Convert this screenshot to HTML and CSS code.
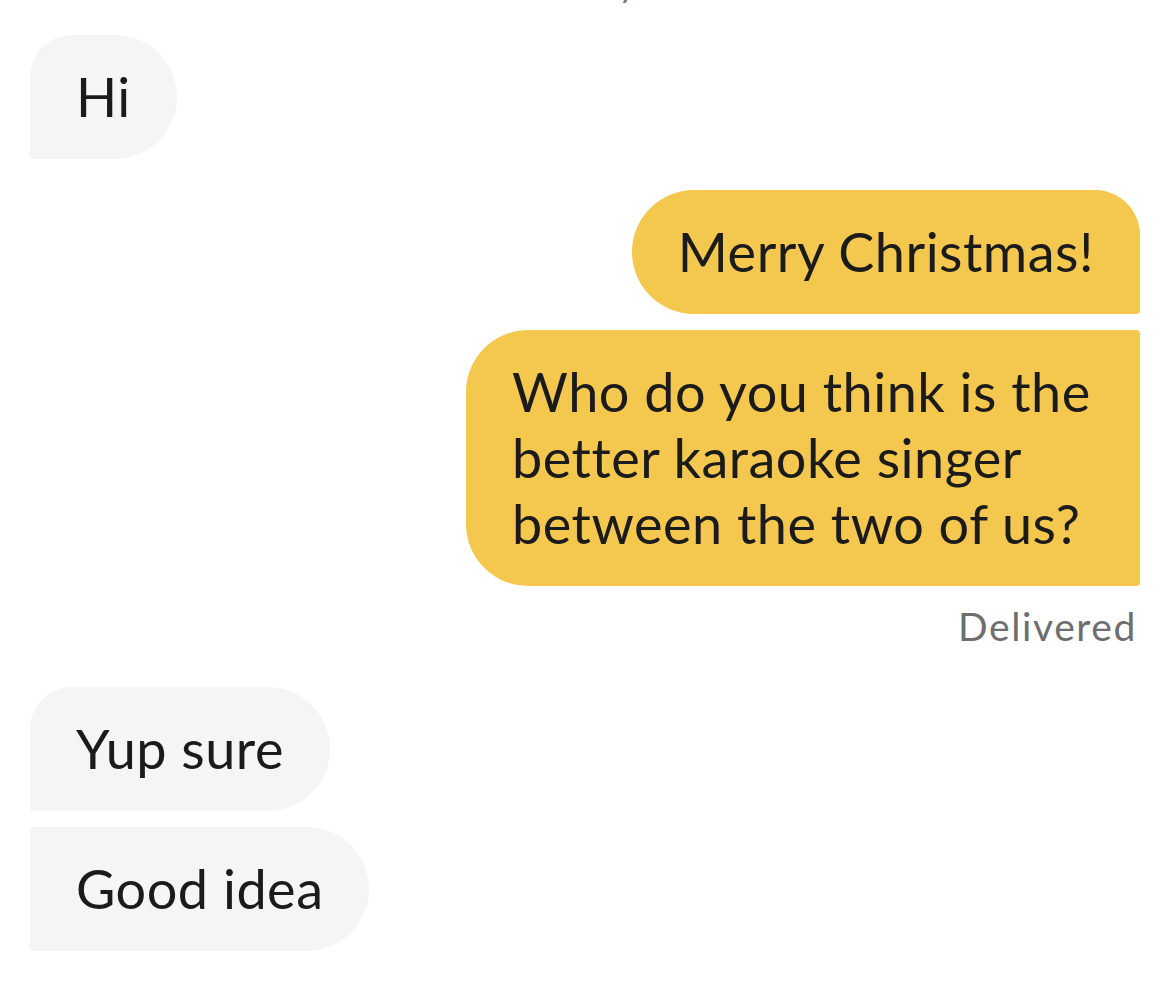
FILE: index.html
```html
<!DOCTYPE html>
<html lang="en">
<head>
    <meta charset="UTF-8">
    <meta name="viewport" content="width=device-width, initial-scale=1.0">
    <title>Chat</title>
    <link rel="stylesheet" href="styles.css">
</head>
<body>

    <div class="chat">
        <p class="day">Today</p>

        <div class="group incoming">
            <div class="msg first">Hi</div>
        </div>

        <div class="group outgoing">
            <div class="msg first">Merry Christmas!</div>
            <div class="msg last">Who do you think is the better karaoke singer between the two of us?</div>
            <p class="status">Delivered</p>
        </div>

        <div class="group incoming">
            <div class="msg first">Yup sure</div>
            <div class="msg last">Good idea</div>
        </div>
    </div>

</body>
</html>
```

FILE: styles.css
```css
body {
    font-family: Lato, "Noto Sans", sans-serif;
    background-color: #ffffff;
    color: #1b1b1b;
    margin: 0;
    padding: 0;
}
.chat {
    display: flex;
    flex-direction: column;
    padding: 0 30px;
}
.day {
    text-align: center;
    color: #777;
    font-size: 34px;
    line-height: 40px;
    margin: -36px 0 31px 14px;
}
.group {
    display: flex;
    flex-direction: column;
    gap: 16px;
}
.incoming {
    align-items: flex-start;
}
.outgoing {
    align-items: flex-end;
    margin-top: 31px;
}
.msg {
    font-size: 54px;
    line-height: 66px;
    letter-spacing: 0.5px;
    padding: 29px 46px;
    max-width: 674px;
    box-sizing: border-box;
}
.incoming .msg {
    background-color: #f5f5f5;
    border-radius: 4px 62px 62px 4px;
}
.incoming .msg.first {
    border-top-left-radius: 42px;
}
.outgoing .msg {
    background-color: #f4c74f;
    border-radius: 62px 4px 4px 62px;
}
.outgoing .msg.first {
    border-top-right-radius: 45px;
}
.status {
    color: #6e6e6e;
    font-size: 39px;
    line-height: 44px;
    letter-spacing: 1.6px;
    margin: 2px 3px 0 0;
}
.outgoing + .incoming {
    margin-top: 39px;
}
```
